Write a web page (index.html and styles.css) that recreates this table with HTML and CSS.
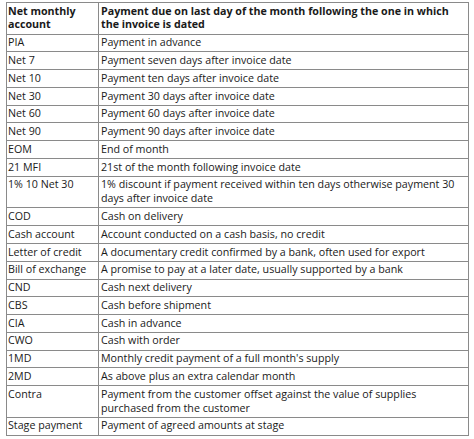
FILE: index.html
```html
<!DOCTYPE html>
<html>
<head>
<meta charset="utf-8">
<link rel="stylesheet" href="styles.css">
</head>
<body>
<table class="terms">
<colgroup><col class="col-code"><col class="col-desc"></colgroup>
<thead>
<tr><th>Net monthly account</th><th>Payment due on last day of the month following the one in which the invoice is dated</th></tr>
</thead>
<tbody>
<tr><td>PIA</td><td>Payment in advance</td></tr>
<tr><td>Net 7</td><td>Payment seven days after invoice date</td></tr>
<tr><td>Net 10</td><td>Payment ten days after invoice date</td></tr>
<tr><td>Net 30</td><td>Payment 30 days after invoice date</td></tr>
<tr><td>Net 60</td><td>Payment 60 days after invoice date</td></tr>
<tr><td>Net 90</td><td>Payment 90 days after invoice date</td></tr>
<tr><td>EOM</td><td>End of month</td></tr>
<tr><td>21 MFI</td><td>21st of the month following invoice date</td></tr>
<tr><td>1% 10 Net 30</td><td>1% discount if payment received within ten days otherwise payment 30 days after invoice date</td></tr>
<tr><td>COD</td><td>Cash on delivery</td></tr>
<tr><td>Cash account</td><td>Account conducted on a cash basis, no credit</td></tr>
<tr><td>Letter of credit</td><td>A documentary credit confirmed by a bank, often used for export</td></tr>
<tr><td>Bill of exchange</td><td>A promise to pay at a later date, usually supported by a bank</td></tr>
<tr><td>CND</td><td>Cash next delivery</td></tr>
<tr><td>CBS</td><td>Cash before shipment</td></tr>
<tr><td>CIA</td><td>Cash in advance</td></tr>
<tr><td>CWO</td><td>Cash with order</td></tr>
<tr><td>1MD</td><td>Monthly credit payment of a full month's supply</td></tr>
<tr><td>2MD</td><td>As above plus an extra calendar month</td></tr>
<tr><td>Contra</td><td>Payment from the customer offset against the value of supplies purchased from the customer</td></tr>
<tr><td>Stage payment</td><td>Payment of agreed amounts at stage</td></tr>
</tbody>
</table>
</body>
</html>
```
FILE: styles.css
```css
html, body {
  margin: 0;
  padding: 0;
  background: #ffffff;
}
body {
  padding: 2px 6px 0 6px;
  font-family: "Open Sans", "Noto Sans", sans-serif;
  font-size: 10.7px;
  color: #1a1a1a;
}
.terms {
  border-collapse: collapse;
  width: 462px;
  table-layout: fixed;
}
.col-code {
  width: 92px;
}
.col-desc {
  width: 370px;
}
.terms th, .terms td {
  border: 1px solid #8a8a8a;
  text-align: left;
  vertical-align: top;
  line-height: 13.8px;
  padding: 1.6px 2px 1.4px 2px;
}
.terms th {
  font-weight: bold;
}
.terms td:first-child, .terms th:first-child {
  padding-left: 1px;
}
```
